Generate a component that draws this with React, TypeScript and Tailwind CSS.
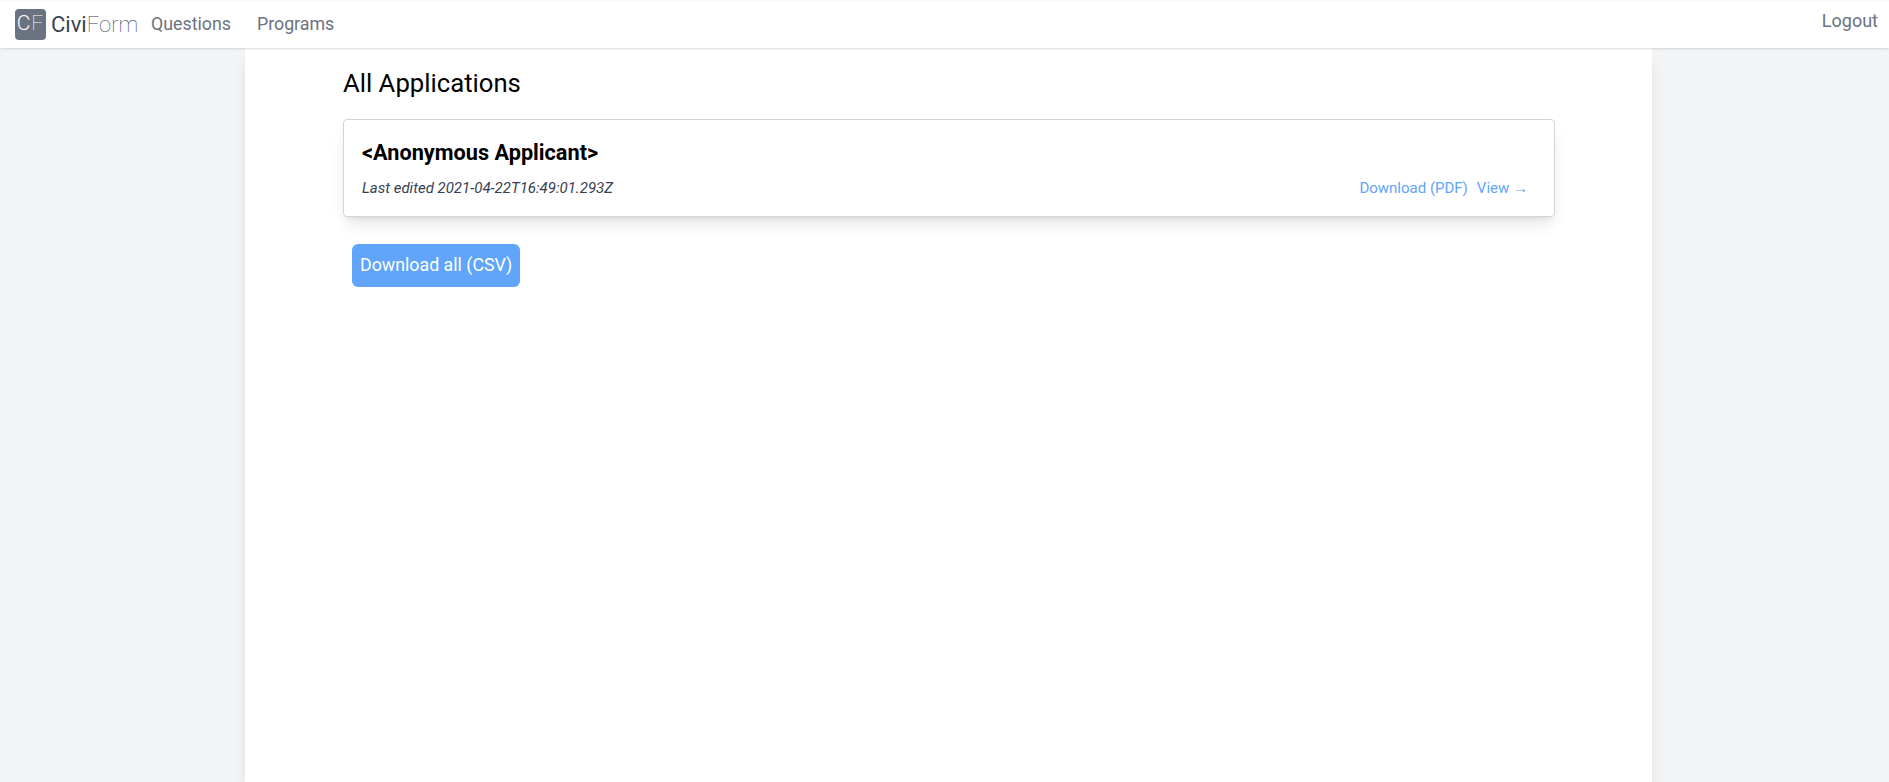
export default function App() {
  return (
    <div className="h-[782px] overflow-hidden bg-[#f3f4f6] font-['Roboto',sans-serif] flex flex-col">
      <nav className="h-[48px] shrink-0 bg-white border-t-2 border-[#fafafa] shadow flex justify-between relative z-10">
        <div className="flex items-center pb-[2px]">
          <div className="ml-[15px] w-[31px] h-[31px] rounded bg-[#6b7280] text-white text-[21px] font-light tracking-[1px] flex items-center justify-center">
            C<span className="font-thin">F</span>
          </div>
          <div className="ml-[5px] text-[22px] text-[#374151] w-[85px]">
            Civi<span className="font-thin">Form</span>
          </div>
          <a className="ml-[15px] text-[17.8px] text-[#6b7280]">Questions</a>
          <a className="ml-[26px] text-[17.8px] text-[#6b7280]">Programs</a>
        </div>
        <a className="mr-[11px] mt-[5px] text-lg text-[#6b7280]">Logout</a>
      </nav>
      <main className="ml-[245px] w-[1407px] grow bg-white shadow-lg pl-[98px] pr-[97px] pt-[19px]">
        <h1 className="text-[25.7px] leading-[32px] text-black">All Applications</h1>
        <div className="mt-[20px] h-[98px] border border-gray-300 rounded bg-white shadow-lg pl-[18px] pr-[26px] pt-[19px]">
          <div className="text-[21.7px] leading-[28px] font-bold text-black">&lt;Anonymous Applicant&gt;</div>
          <div className="mt-[11px] flex justify-between text-[15px] leading-[20px]">
            <span className="italic text-[#374151]">Last edited 2021-04-22T16:49:01.293Z</span>
            <span className="text-[#60a5fa]">
              <a>Download (PDF)</a>
              <a className="ml-[9px]">View →</a>
            </span>
          </div>
        </div>
        <button className="mt-[27px] ml-[9px] h-[43px] px-[8px] rounded-md bg-[#60a5fa] text-white text-[17.8px]">
          Download all (CSV)
        </button>
      </main>
    </div>
  );
}
